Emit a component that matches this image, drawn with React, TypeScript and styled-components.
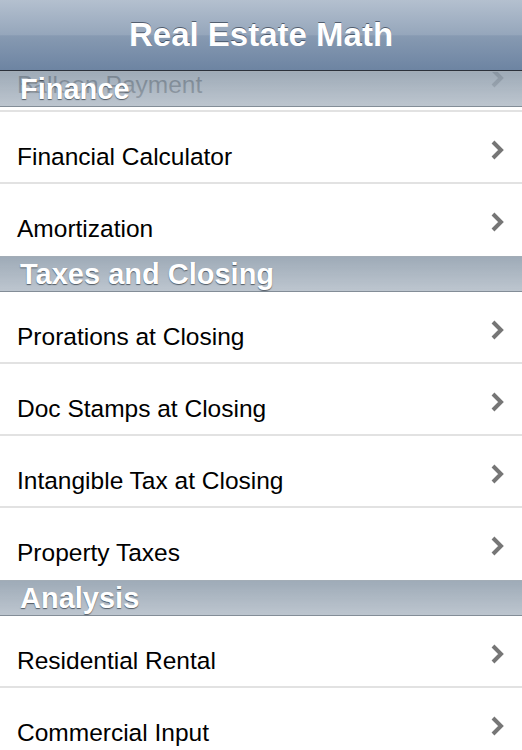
import React from "react";
import styled, { createGlobalStyle } from "styled-components";

const GlobalStyle = createGlobalStyle`
  html, body { margin: 0; padding: 0; background: #ffffff; }
  body { font-family: "Liberation Sans", Arial, Helvetica, sans-serif; }
  * { box-sizing: border-box; }
`;

const Screen = styled.div`
  width: 522px;
  height: 750px;
  display: flex;
  flex-direction: column;
  overflow: hidden;
  background: #ffffff;
`;

const NavBar = styled.header`
  flex: 0 0 auto;
  height: 71px;
  display: flex;
  align-items: center;
  justify-content: center;
  background: linear-gradient(#b4c0cf 0%, #95a6bb 50%, #879ab2 51%, #6d84a2 100%);
  border-bottom: 1px solid #2b313b;
  padding-bottom: 1px;
`;

const Title = styled.h1`
  margin: 0;
  font-size: 33px;
  font-weight: 700;
  color: #ffffff;
  text-shadow: 0 -1px 0 rgba(30, 40, 55, 0.6);
`;

const Table = styled.div`
  flex: 1 1 auto;
  overflow: hidden;
  display: flex;
  flex-direction: column;
`;

const Section = styled.section`
  position: relative;
  display: flex;
  flex-direction: column;
`;

const SectionHeader = styled.div<{ $floating?: boolean }>`
  height: 36px;
  display: flex;
  align-items: center;
  padding-left: 20px;
  font-size: 29px;
  font-weight: 700;
  color: #ffffff;
  text-shadow: 0 1px 1px rgba(40, 48, 58, 0.7);
  background: linear-gradient(rgba(140, 155, 170, 0.84), rgba(178, 188, 199, 0.86));
  border-top: 1px solid rgba(160, 170, 180, 0.9);
  border-bottom: 1px solid rgba(128, 138, 148, 0.9);
  ${(p) =>
    p.$floating
      ? `position: absolute; top: 0; left: 0; right: 0; z-index: 2;`
      : ``}
`;

const Row = styled.div<{ $hidden?: boolean; $last?: boolean }>`
  height: 72px;
  flex: 0 0 72px;
  display: flex;
  align-items: center;
  padding: 19px 16px 0 17px;
  border-bottom: 2px solid ${(p) => (p.$last ? "transparent" : "#e2e2e2")};
  ${(p) => (p.$hidden ? `margin-top: -31px;` : ``)}
`;

const Label = styled.span`
  flex: 1 1 auto;
  font-size: 24.5px;
  color: #000000;
`;

const Chevron = styled.svg`
  flex: 0 0 auto;
  width: 16px;
  height: 22px;
  margin-bottom: 14px;
  margin-right: 1px;
`;

const Arrow = () => (
  <Chevron viewBox="0 0 16 22">
    <polyline
      points="4,3 12,11 4,19"
      fill="none"
      stroke="#767676"
      strokeWidth="4"
      strokeLinecap="butt"
      strokeLinejoin="miter"
    />
  </Chevron>
);

type SectionData = { title: string; items: string[]; scrolled?: string };

const sections: SectionData[] = [
  {
    title: "Finance",
    scrolled: "Balloon Payment",
    items: ["Financial Calculator", "Amortization"],
  },
  {
    title: "Taxes and Closing",
    items: [
      "Prorations at Closing",
      "Doc Stamps at Closing",
      "Intangible Tax at Closing",
      "Property Taxes",
    ],
  },
  {
    title: "Analysis",
    items: ["Residential Rental", "Commercial Input"],
  },
];

export default function App() {
  return (
    <>
      <GlobalStyle />
      <Screen>
        <NavBar>
          <Title>Real Estate Math</Title>
        </NavBar>
        <Table>
          {sections.map((s) => (
            <Section key={s.title}>
              <SectionHeader $floating={!!s.scrolled}>{s.title}</SectionHeader>
              {s.scrolled && (
                <Row $hidden>
                  <Label>{s.scrolled}</Label>
                  <Arrow />
                </Row>
              )}
              {s.items.map((it, i) => (
                <Row key={it} $last={i === s.items.length - 1}>
                  <Label>{it}</Label>
                  <Arrow />
                </Row>
              ))}
            </Section>
          ))}
        </Table>
      </Screen>
    </>
  );
}
